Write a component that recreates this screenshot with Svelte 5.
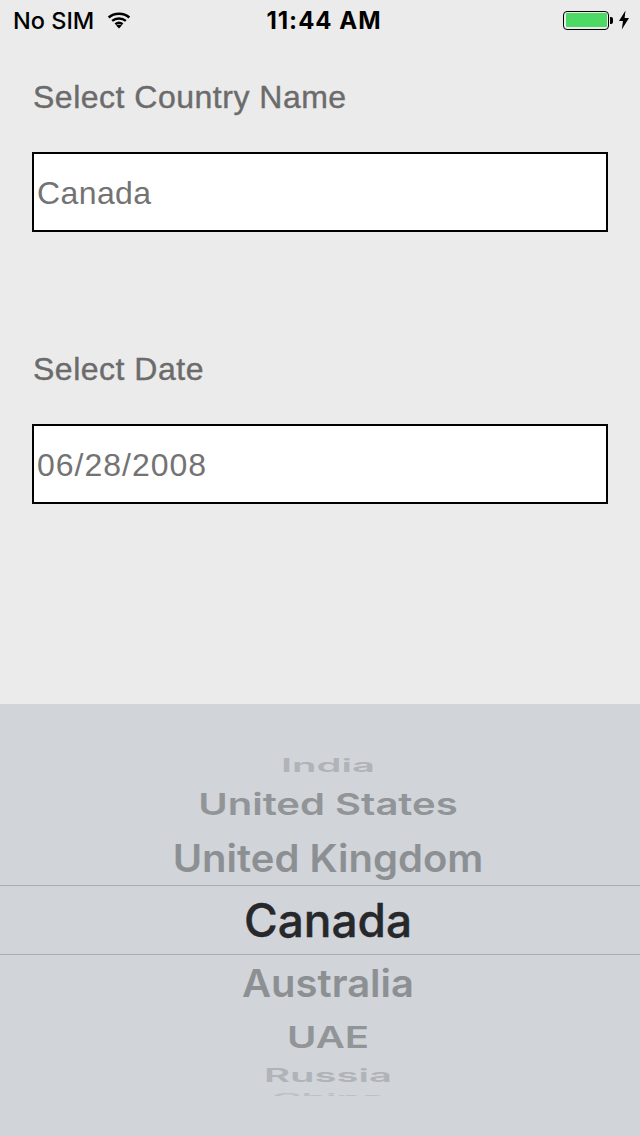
<script lang="ts">
	// Wheel rows, top to bottom. `squash` fakes the cylinder foreshortening.
	const above = [
		{ name: 'India', height: 20, squash: 0.45, color: '#b0b3b7' },
		{ name: 'United States', height: 56, squash: 0.76, color: '#929598' },
		{ name: 'United Kingdom', height: 53, squash: 0.94, color: '#8d9093' }
	];
	const below = [
		{ name: 'Australia', height: 54, squash: 0.96, color: '#8d9093' },
		{ name: 'UAE', height: 54, squash: 0.74, color: '#929598' },
		{ name: 'Russia', height: 22, squash: 0.45, color: '#b0b3b7' },
		{ name: 'China', height: 9, squash: 0.25, color: '#bcbfc3', clip: true }
	];
</script>

<div class="screen">
	<div class="status">
		<div class="left">
			<span>No SIM</span>
			<svg class="wifi" width="24" height="18" viewBox="0 0 26 20" aria-hidden="true">
				<path d="M1.5 7.2C7.8 1.6 18.2 1.6 24.5 7.2" />
				<path d="M5.4 11C9.6 7.4 16.4 7.4 20.6 11" />
				<path d="M9 14.6C11.3 12.8 14.7 12.8 17 14.6" />
				<polygon points="13,19.5 9.8,16.2 11.5,15.2 14.5,15.2 16.2,16.2" />
			</svg>
		</div>
		<div class="time">11:44 AM</div>
		<div class="right">
			<div class="battery"><div class="fill"></div></div>
			<div class="nub"></div>
			<svg class="bolt" width="12" height="20" viewBox="0 0 12 20" aria-hidden="true">
				<polygon points="7.5,0.5 1,11 5,11 3.8,19.5 11,8 6.6,8" />
			</svg>
		</div>
	</div>

	<div class="form">
		<div class="label">Select Country Name</div>
		<div class="field">Canada</div>
		<div class="label second">Select Date</div>
		<div class="field date">06/28/2008</div>
	</div>

	<div class="picker">
		<div class="upper">
			{#each above as row}
				<div class="row" style="height:{row.height}px;color:{row.color}">
					<span style="transform:scaleY({row.squash})">{row.name}</span>
				</div>
			{/each}
		</div>
		<div class="selected">Canada</div>
		<div class="lower">
			{#each below as row}
				<div class="row" class:clip={row.clip} style="height:{row.height}px;color:{row.color}">
					<span style="transform:scaleY({row.squash})">{row.name}</span>
				</div>
			{/each}
		</div>
	</div>
</div>

<style>
	:global(body) {
		margin: 0;
		background: #ebebeb;
	}
	.screen {
		width: 640px;
		height: 1136px;
		display: flex;
		flex-direction: column;
		background: #ebebeb;
		font-family: 'Liberation Sans', Arial, sans-serif;
		overflow: hidden;
	}
	.status {
		height: 40px;
		flex: none;
		display: grid;
		grid-template-columns: 1fr auto 1fr;
		align-items: center;
		padding: 0 10px 0 13px;
		color: #000;
		font-family: Inter, 'Liberation Sans', sans-serif;
		font-size: 23.5px;
		font-weight: 500;
	}
	.left {
		display: flex;
		align-items: center;
		gap: 13px;
	}
	.wifi {
		flex: none;
		fill: #000;
	}
	.wifi path {
		fill: none;
		stroke: #000;
		stroke-width: 2.8;
	}
	.time {
		margin-left: 5px;
		font-weight: 700;
		font-size: 24px;
		letter-spacing: 1px;
	}
	.right {
		display: flex;
		align-items: center;
		justify-content: flex-end;
	}
	.battery {
		width: 46px;
		height: 19px;
		box-sizing: border-box;
		border: 1.5px solid #000;
		border-radius: 4px;
		padding: 1.5px;
	}
	.fill {
		height: 100%;
		background: #4cd964;
		border-radius: 1px;
	}
	.nub {
		width: 3px;
		height: 7px;
		background: #000;
		border-radius: 0 2px 2px 0;
		margin: 0 5px 0 1px;
	}
	.form {
		flex: 1;
		display: flex;
		flex-direction: column;
		padding: 38px 32px 0;
	}
	.label {
		height: 38px;
		line-height: 38px;
		padding-left: 1px;
		font-size: 32px;
		letter-spacing: 0.5px;
		color: #6b6b6b;
		-webkit-text-stroke: 0.4px #6b6b6b;
	}
	.second {
		margin-top: 118px;
	}
	.field {
		height: 80px;
		box-sizing: border-box;
		margin-top: 36px;
		border: 2px solid #000;
		background: #fff;
		padding-left: 3px;
		line-height: 78px;
		font-size: 32px;
		letter-spacing: 0.4px;
		color: #737373;
	}
	.date {
		letter-spacing: 1px;
	}
	.picker {
		flex: none;
		height: 432px;
		background: #d1d4d9;
		font-family: Inter, 'Liberation Sans', sans-serif;
		font-weight: 600;
	}
	.upper {
		height: 181px;
		box-sizing: border-box;
		padding-top: 52px;
	}
	.row {
		display: flex;
		justify-content: center;
		align-items: center;
		padding-left: 16px;
		font-size: 40px;
		white-space: nowrap;
	}
	.row span {
		display: block;
		line-height: 1;
	}
	.clip {
		overflow: hidden;
	}
	.clip span {
		margin-top: 10px;
	}
	.selected {
		height: 68px;
		border-top: 1px solid #a9acb1;
		border-bottom: 1px solid #a9acb1;
		padding-left: 16px;
		text-align: center;
		line-height: 68px;
		font-size: 46px;
		font-weight: 500;
		color: #27282b;
		-webkit-text-stroke: 0.4px #27282b;
	}
	.lower {
		padding-top: 2px;
	}
</style>
